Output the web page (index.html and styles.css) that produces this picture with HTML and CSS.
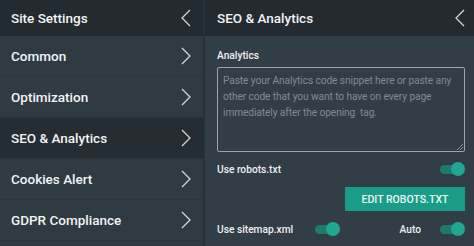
FILE: index.html
```html
<!DOCTYPE html>
<html>
<head>
<meta charset="utf-8">
<link rel="stylesheet" href="styles.css">
</head>
<body>
<div class="app">
  <aside class="side">
    <div class="head">
      <span class="title">Site Settings</span>
      <svg class="chev" width="10" height="18" viewBox="0 0 10 18"><path d="M9 1L1 9l8 8" fill="none" stroke="#cfd4d8" stroke-width="1.3"/></svg>
    </div>
    <div class="item"><span>Common</span><svg class="chev" width="10" height="18" viewBox="0 0 10 18"><path d="M1 1l8 8-8 8" fill="none" stroke="#cfd4d8" stroke-width="1.3"/></svg></div>
    <div class="item"><span>Optimization</span><svg class="chev" width="10" height="18" viewBox="0 0 10 18"><path d="M1 1l8 8-8 8" fill="none" stroke="#cfd4d8" stroke-width="1.3"/></svg></div>
    <div class="item active"><span>SEO &amp; Analytics</span><svg class="chev" width="10" height="18" viewBox="0 0 10 18"><path d="M1 1l8 8-8 8" fill="none" stroke="#cfd4d8" stroke-width="1.3"/></svg></div>
    <div class="item"><span>Cookies Alert</span><svg class="chev" width="10" height="18" viewBox="0 0 10 18"><path d="M1 1l8 8-8 8" fill="none" stroke="#cfd4d8" stroke-width="1.3"/></svg></div>
    <div class="item"><span>GDPR Compliance</span><svg class="chev" width="10" height="18" viewBox="0 0 10 18"><path d="M1 1l8 8-8 8" fill="none" stroke="#cfd4d8" stroke-width="1.3"/></svg></div>
  </aside>
  <main class="main">
    <div class="head">
      <span class="title">SEO &amp; Analytics</span>
      <svg class="chev" width="10" height="18" viewBox="0 0 10 18"><path d="M9 1L1 9l8 8" fill="none" stroke="#cfd4d8" stroke-width="1.3"/></svg>
    </div>
    <div class="body">
      <div class="label">Analytics</div>
      <div class="textarea">Paste your Analytics code snippet here or paste any other code that you want to have on every page immediately after the opening &nbsp;tag.<svg class="grip" width="6" height="6" viewBox="0 0 6 6"><path d="M6 0L0 6M6 3L3 6" stroke="#9aa5ab" stroke-width="0.8"/></svg></div>
      <div class="row">
        <span class="label">Use robots.txt</span>
        <span class="toggle"></span>
      </div>
      <div class="btnrow"><button class="btn">EDIT ROBOTS.TXT</button></div>
      <div class="row last">
        <span class="label">Use sitemap.xml</span>
        <span class="toggle sm"></span>
        <span class="label auto">Auto</span>
        <span class="toggle"></span>
      </div>
    </div>
  </main>
</div>
</body>
</html>
```
FILE: styles.css
```css
* { box-sizing: border-box; }
html, body { margin: 0; padding: 0; }
body {
  width: 474px; height: 246px; overflow: hidden;
  background: #313c44;
  font-family: Roboto, "Liberation Sans", sans-serif;
  color: #f1f3f4;
}
.app { display: flex; height: 246px; }
.side {
  width: 203px; flex: none;
  background: #2f3a41;
  display: flex; flex-direction: column;
}
.head {
  height: 36px; flex: none;
  background: #232a30;
  display: flex; align-items: center; justify-content: space-between;
  padding: 0 12px 0 11px;
}
.title { font-size: 13.5px; font-weight: 500; }
.item {
  height: 41px; flex: none;
  display: flex; align-items: center; justify-content: space-between;
  padding: 0 12px 0 11px;
  font-size: 13.5px; font-weight: 500;
  border-bottom: 1px solid #2a343a;
}
.item.active { background: #252d33; }
.main {
  flex: 1; display: flex; flex-direction: column;
  border-left: 2px solid #283137;
  background: #323e46;
}
.main .head { padding: 0 9px 0 12px; }
.body { padding: 14px 9px 0 12px; display: flex; flex-direction: column; }
.label { font-size: 10.2px; font-weight: 500; color: #eef0f1; }
.textarea {
  position: relative;
  margin-top: 6px;
  height: 85px;
  border: 1px solid #9aa5ab;
  border-radius: 2px;
  padding: 5px 4px 5px 5px;
  font-size: 10.2px; line-height: 16px; letter-spacing: -0.1px;
  color: #7f8b92;
}
.grip { position: absolute; right: 1px; bottom: 1px; }
.row { display: flex; align-items: center; justify-content: space-between; margin-top: 9px; height: 16px; }
.toggle {
  position: relative; width: 25px; height: 14px; flex: none;
}
.toggle::before {
  content: ""; position: absolute; left: 0; top: 3px; width: 22px; height: 9px;
  border-radius: 5px; background: #1e7a6c;
}
.toggle::after {
  content: ""; position: absolute; right: 0; top: 0; width: 14px; height: 14px;
  border-radius: 50%; background: #1fa88f;
}
.btnrow { display: flex; justify-content: flex-end; margin-top: 10px; }
.btn {
  width: 120px; height: 24px; border: 0; border-radius: 0;
  background: #1a9d88; color: #eef7f5;
  font-family: Roboto, "Liberation Sans", sans-serif;
  font-size: 10.5px; font-weight: 500;
}
.row.last { margin-top: 10px; justify-content: flex-start; }
.row.last .sm { margin-left: 22px; }
.row.last .auto { margin-left: auto; margin-right: 19px; }
```
